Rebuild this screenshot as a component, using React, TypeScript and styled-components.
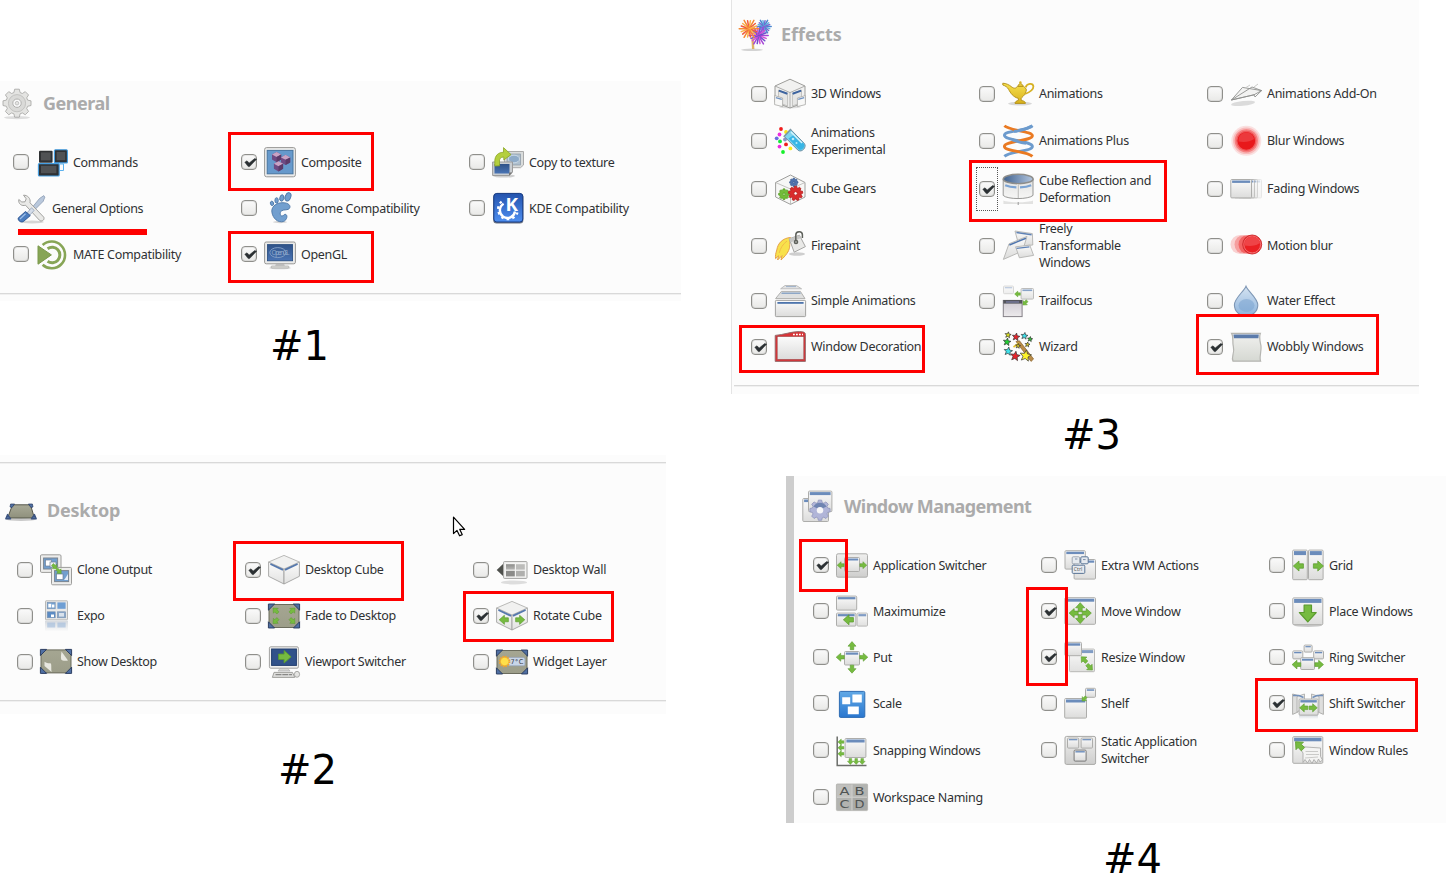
import React from 'react';
import styled, { createGlobalStyle } from 'styled-components';

const GlobalStyle = createGlobalStyle`
  body { margin: 0; background: #fff; }
`;

/* ---------- layout ---------- */

const Page = styled.main`
  display: flex;
  width: 1447px;
  height: 873px;
  overflow: hidden;
  background: #fff;
  font-family: 'Noto Sans', sans-serif;
`;

const Column = styled.div<{ $width: number; $top: number }>`
  display: flex;
  flex-direction: column;
  flex: none;
  box-sizing: border-box;
  width: ${p => p.$width}px;
  padding-top: ${p => p.$top}px;
`;

const Panel = styled.section<{ $width: number; $height: number; $indent?: number; $bar?: string; $pad: number }>`
  position: relative;
  flex: none;
  box-sizing: border-box;
  width: ${p => p.$width}px;
  height: ${p => p.$height}px;
  margin-left: ${p => p.$indent ?? 0}px;
  padding-top: ${p => p.$pad}px;
  background: #fcfcfc;
  border-left: ${p => p.$bar ?? 'none'};
`;

const Heading = styled.header<{ $left: number }>`
  display: flex;
  align-items: center;
  gap: 10px;
  height: 32px;
  padding-left: ${p => p.$left}px;
`;

const Title = styled.h2<{ $tracking?: number; $lift?: number }>`
  margin: 0 0 ${p => p.$lift ?? 0}px;
  color: #ababab;
  font-size: 18px;
  font-weight: 700;
  letter-spacing: ${p => p.$tracking ?? 0}px;
  line-height: 24px;
  white-space: nowrap;
`;

const Grid = styled.div<{ $left: number; $top: number; $rows: string }>`
  display: grid;
  grid-template-columns: repeat(3, 228px);
  grid-template-rows: ${p => p.$rows};
  width: 684px;
  margin-top: ${p => p.$top}px;
  padding-left: ${p => p.$left}px;
`;

const Item = styled.div<{ $plain?: boolean }>`
  display: flex;
  align-items: center;
  padding-left: ${p => (p.$plain ? 2 : 0)}px;
`;

const Check = styled.span`
  display: block;
  flex: none;
  box-sizing: border-box;
  width: 16px;
  height: 16px;
  margin-right: 7px;
  border: 1px solid #8f8f8b;
  border-radius: 4px;
  background: linear-gradient(#fafafa, #e9e9e7);
  box-shadow: inset 0 0 0 1px rgba(140, 140, 136, 0.18);
`;

const Tick = styled.svg`
  display: block;
  margin: -1px;
  overflow: visible;
`;

const IconBox = styled.svg`
  display: block;
  flex: none;
  width: 32px;
  height: 32px;
  overflow: visible;
`;

const Label = styled.span<{ $lift?: boolean }>`
  margin: 0 0 ${p => (p.$lift ? 1 : 0)}px 5px;
  color: #2f3133;
  font-size: 12.5px;
  letter-spacing: -0.3px;
  line-height: 17px;
  white-space: pre;
`;

const Divider = styled.hr<{ $y: number; $left?: number }>`
  position: absolute;
  top: ${p => p.$y}px;
  left: ${p => p.$left ?? 0}px;
  right: 0;
  height: 1px;
  margin: 0;
  border: 0;
  background: #d9d9d9;
  box-shadow: 0 1px 0 #f0f0f0;
`;

const Caption = styled.p<{ $left: number; $top: number; $height: number }>`
  flex: none;
  box-sizing: border-box;
  height: ${p => p.$height}px;
  margin: 0;
  padding: ${p => p.$top}px 0 0 ${p => p.$left}px;
  color: #000;
  font-family: 'DejaVu Sans', sans-serif;
  font-size: 40px;
  line-height: 28px;
`;

const Mark = styled.div<{ $x: number; $y: number; $w: number; $h: number }>`
  position: absolute;
  box-sizing: border-box;
  left: ${p => p.$x}px;
  top: ${p => p.$y}px;
  width: ${p => p.$w}px;
  height: ${p => p.$h}px;
  border: 3px solid #fe0000;
`;

const FocusRing = styled(Mark)`
  border: 1px dotted #555;
`;

const Pointer = styled.svg`
  position: absolute;
  left: 452px;
  top: 61px;
`;

const Defs = styled.svg`
  position: absolute;
  width: 0;
  height: 0;
`;

/* ---------- icon building blocks ---------- */

type WinProps = { x: number; y: number; w: number; h: number; bar?: number; o?: number; stroke?: string };
const Win = ({ x, y, w, h, bar = 2, o = 1, stroke = '#adadab' }: WinProps) => (
  <g opacity={o}>
    <rect x={x + 0.5} y={y + 0.5} width={w - 1} height={h - 1} rx="1" fill="url(#gWin)" stroke={stroke} />
    <rect x={x + 1.8} y={y + 1.5} width={w - 3.6} height={bar} fill="#6b8cbb" />
  </g>
);

type ArrowProps = { x: number; y: number; r?: number; s?: number };
const Arrow = ({ x, y, r = 0, s = 1 }: ArrowProps) => (
  <path
    d="M-4.6-2.1H-.4V-4.8L5 0L-.4 4.8V2.1H-4.6Z"
    transform={`translate(${x} ${y}) rotate(${r}) scale(${s})`}
    fill="#76bb40"
    stroke="#5b9c2e"
    strokeWidth="0.7"
    strokeLinejoin="round"
  />
);

type GearProps = { x: number; y: number; r: number; n?: number; fill: string; stroke: string; hole?: string };
const Gear = ({ x, y, r, n = 8, fill, stroke, hole = '#fff' }: GearProps) => {
  const pts: string[] = [];
  for (let i = 0; i < n; i++) {
    const a = (i * 2 * Math.PI) / n - Math.PI / 2;
    const step = Math.PI / n;
    [[-0.72, 0.78], [-0.42, 1], [0.42, 1], [0.72, 0.78]].forEach(([k, m]) => {
      pts.push(`${(x + Math.cos(a + k * step) * r * m).toFixed(2)},${(y + Math.sin(a + k * step) * r * m).toFixed(2)}`);
    });
  }
  return (
    <g strokeWidth="0.8">
      <polygon points={pts.join(' ')} fill={fill} stroke={stroke} strokeLinejoin="round" />
      <circle cx={x} cy={y} r={r * 0.24} fill={hole} stroke={stroke} />
    </g>
  );
};

const Star = ({ x, y, r, c }: { x: number; y: number; r: number; c: string }) => {
  const pts = Array.from({ length: 10 }, (_, i) => {
    const a = (i * Math.PI) / 5 - Math.PI / 2 + 0.15;
    const m = i % 2 ? r * 0.45 : r;
    return `${(x + Math.cos(a) * m).toFixed(2)},${(y + Math.sin(a) * m).toFixed(2)}`;
  });
  return <polygon points={pts.join(' ')} fill={c} stroke="#333" strokeWidth="0.7" />;
};

const Burst = ({ x, y, r, colors }: { x: number; y: number; r: number; colors: string[] }) => (
  <g strokeWidth="1.5" strokeLinecap="round">
    {Array.from({ length: 18 }, (_, i) => {
      const a = (i * 2 * Math.PI) / 18;
      const m = i % 3 === 0 ? r : r * 0.84;
      return (
        <line
          key={i}
          x1={x}
          y1={y}
          x2={x + Math.cos(a) * m}
          y2={y + Math.sin(a) * m}
          stroke={colors[i % colors.length]}
        />
      );
    })}
  </g>
);

const CubeShape = () => (
  <g strokeLinejoin="round">
    <path d="M.6 8L16 15V30L.6 22.3Z" fill="url(#gFace)" stroke="#a2a2a0" strokeWidth="0.9" />
    <path d="M31.4 8L16 15V30L31.4 22.3Z" fill="url(#gFace)" stroke="#a2a2a0" strokeWidth="0.9" />
    <path d="M16 1.4L31.4 8L16 15L.6 8Z" fill="#f1f1f0" stroke="#b2b2b0" strokeWidth="0.9" />
    <path d="M2.4 10L15 15.900M17 15.900L29.6 10" stroke="#5578ad" strokeWidth="1.8" fill="none" />
  </g>
);

const DeskBase = () => (
  <g>
    <rect x="1" y="4.5" width="30" height="23" rx="1" fill="url(#gDesk)" stroke="#6b6c5d" />
    <path d="M.4 4H6.6L.4 10.2ZM31.6 4H25.4L31.6 10.2ZM.4 28H6.6L.4 21.8ZM31.6 28H25.4L31.6 21.8Z" fill="#4f6fa3" stroke="#27395c" strokeWidth="0.9" />
  </g>
);

const Hex = ({ x, y }: { x: number; y: number }) => (
  <g transform={`translate(${x} ${y})`}>
    <path d="M0-5L4.6-2.4V2.6L0 5.2L-4.6 2.6V-2.4Z" fill="#6f4a84" />
    <path d="M0-5L4.6-2.4L0 0L-4.6-2.4Z" fill="#c9a3c4" />
    <path d="M0 0L4.6-2.4V2.6L0 5.2Z" fill="#5b3a69" />
  </g>
);

const icons: Record<string, React.ReactNode> = {
  general: (
    <g>
      <ellipse cx="16" cy="29.6" rx="13" ry="1.6" fill="#000" opacity="0.12" />
      <Gear x={16} y={15.2} r={14.2} n={8} fill="#e4e4e2" stroke="#a3a3a1" hole="#f6f6f5" />
      <circle cx="16" cy="15.2" r="8.6" fill="#dadad8" stroke="#c3c3c1" />
      <circle cx="16" cy="15.2" r="4.2" fill="#fafafa" stroke="#afafad" />
      <circle cx="16" cy="15.2" r="1.8" fill="#e4e4e2" stroke="#b9b9b7" strokeWidth="0.8" />
    </g>
  ),
  commands: (
    <g>
      <rect x="3" y="4.8" width="13.6" height="12" rx="1" fill="#2f3133" />
      <rect x="5" y="6.4" width="9.6" height="8" fill="#505254" />
      <path d="M24 18h3.5v6.5H24" fill="none" stroke="#5cb2ee" />
      <rect x="18.4" y="3.7" width="13" height="13.2" rx="1" fill="#2f3133" stroke="#469fe2" strokeWidth="1.1" />
      <rect x="20.6" y="6" width="8.6" height="8.2" fill="#505254" />
      <rect x="2.4" y="17.6" width="20.8" height="12.4" rx="1" fill="#2f3133" stroke="#469fe2" strokeWidth="1.1" />
      <rect x="5" y="19.8" width="15.4" height="7.4" fill="#505254" />
    </g>
  ),
  composite: (
    <g>
      <rect x="0.6" y="1.6" width="30.8" height="29.2" rx="2" fill="#ededec" stroke="#989896" />
      <rect x="3.2" y="4.4" width="25.8" height="23.4" fill="#6699cc" stroke="#47749f" />
      <Hex x={12.6} y={11} />
      <Hex x={21.6} y={13.8} />
      <Hex x={14.5} y={20.2} />
    </g>
  ),
  copy: (
    <g>
      <ellipse cx="12" cy="30" rx="11" ry="1.6" fill="#000" opacity="0.18" />
      <path d="M12.5 5.5H31.5V19L28.5 21.7H12.5Z" fill="#d9dcdc" stroke="#aaa" />
      <rect x="15" y="8" width="13.5" height="11" fill="#aebfce" stroke="#8b97a3" strokeWidth="0.7" />
      <ellipse cx="22" cy="13" rx="5.5" ry="3.8" fill="#8eabc8" stroke="#dbe6ef" strokeWidth="0.7" />
      <path d="M.6 16H20.5V26L17 29.5H.6Z" fill="#c9cdd1" stroke="#9b9b9b" />
      <rect x="2.5" y="18" width="15" height="9.5" fill="url(#gNavy)" />
      <path d="M17 30L20.5 26.5H17Z" fill="#777" />
      <path d="M2.8 20V16C2.5 9 7 6.2 11.5 6.3V1.6L19 8.6L11.8 14V11C8.5 11 7 13 7.5 16V19.8Z" fill="#b4cf3e" stroke="#8ba624" strokeWidth="0.8" />
    </g>
  ),
  tools: (
    <g>
      <ellipse cx="17" cy="30" rx="12" ry="1.4" fill="#000" opacity="0.15" />
      <path d="M28.8 3.6L29.8 5.2L28.2 9.3L19 18.5L16.6 16.2L24.5 6.5Z" fill="#b9c8dc" stroke="#8a9bb3" strokeWidth="0.8" />
      <path d="M3.8 7.5C3 12 7 14.5 10.5 13.2L24.5 28.3C26 30 30 28.5 28.8 25.2L15 10.8C16 6.5 12.5 3 8.5 3.2L11.2 6.8L10 9.8L6.8 10Z" fill="#e9e9e7" stroke="#989896" strokeWidth="0.9" />
      <path d="M16.5 15.8L19.2 18.4L13.5 24.5L11 22Z" fill="#d4dce8" stroke="#8a9bb3" strokeWidth="0.7" />
      <path d="M10.5 19.5L15.3 23.6L8.6 29.4C6.5 31 2.6 29 3.2 26Z" fill="#4c7dbf" stroke="#2d5490" strokeWidth="0.9" />
      <path d="M10.5 21.8L5 27" stroke="#9fc0ea" strokeWidth="1.2" />
    </g>
  ),
  gnome: (
    <g fill="#729fcf" stroke="#4c76a6" strokeWidth="0.9">
      <ellipse cx="16" cy="30" rx="7" ry="1.2" fill="#000" opacity="0.15" stroke="none" />
      <ellipse cx="24" cy="4.8" rx="2.7" ry="4.3" transform="rotate(22 24 4.8)" />
      <ellipse cx="17.8" cy="6" rx="2" ry="3.2" transform="rotate(12 17.8 6)" />
      <ellipse cx="12.6" cy="8.4" rx="1.7" ry="2.7" />
      <ellipse cx="8" cy="11.4" rx="1.6" ry="2.2" transform="rotate(-15 8 11.4)" />
      <path d="M7.8 19C7.8 14 13 10.5 19 10.7C24.5 10.8 27 13.5 25.6 16.2C24.3 18.6 20 17.2 17.6 18.8C15.4 20.4 16 24 18 24C20 24 20 21.8 21.8 22.4C24 23.2 23 29.8 17.5 29.8C11.5 29.8 8 24 7.8 19Z" />
    </g>
  ),
  kde: (
    <g>
      <rect x="1.2" y="1.4" width="30.2" height="30" rx="3.5" fill="#6c7382" />
      <rect x="1.8" y="1.4" width="29" height="28.6" rx="3" fill="url(#gKde)" stroke="#173c86" />
      <path d="M11.600 11.800A7.600 7.600 0 1 0 23 19.500" fill="none" stroke="#fff" strokeWidth="2.4" />
      <path d="M9.600 9.600A10 10 0 1 0 25.500 20.500" fill="none" stroke="#fff" strokeWidth="2.2" strokeDasharray="2.6 3.1" />
      <text x="13.4" y="18.6" fontFamily="Noto Sans" fontWeight="700" fontSize="18" fill="#fff" textLength="12.500" lengthAdjust="spacingAndGlyphs">K</text>
    </g>
  ),
  mate: (
    <g fill="none" stroke="#87a556">
      <path d="M6.600 7A13.400 13.400 0 1 1 6.600 26.800" strokeWidth="2.6" />
      <path d="M11.600 10.800A7.700 7.700 0 1 1 11.600 23.200" strokeWidth="3" />
      <path d="M2 7.800L15.4 16.900L2 26.200Z" fill="#87a556" stroke="#7b994b" />
    </g>
  ),
  opengl: (
    <g>
      <ellipse cx="16" cy="30" rx="11" ry="1.3" fill="#000" opacity="0.14" />
      <path d="M12 25.5H20L21 28.5H11Z" fill="#ccc" />
      <rect x="7" y="28" width="18" height="2" rx="1" fill="#e0e0de" stroke="#a4a4a2" strokeWidth="0.7" />
      <rect x="0.6" y="4" width="30.8" height="21.8" rx="1.6" fill="#ebebea" stroke="#989896" />
      <rect x="3.4" y="6.6" width="25.2" height="16.2" fill="url(#gNavy)" stroke="#254a7e" strokeWidth="0.8" />
      <ellipse cx="13.800" cy="14.6" rx="8" ry="5" fill="none" stroke="#7f9cc4" strokeWidth="1" />
      <text x="7.5" y="17" fontFamily="Noto Sans" fontSize="6.6" fill="#8fa9cb" textLength="18">OpenGL</text>
    </g>
  ),
  desktop: (
    <g>
      <ellipse cx="16" cy="25.6" rx="15" ry="1.3" fill="#000" opacity="0.2" />
      <path d="M7.5 10.8H25.5L29.4 24H2.6Z" fill="url(#gOlive)" stroke="#55564a" strokeLinejoin="round" />
      <path d="M5.6 10H9.6L7 13.6L5 13ZM27.4 10H23.4L26 13.6L28 13Z" fill="#4f6fa3" stroke="#2b3d63" strokeWidth="0.7" />
      <path d="M2.6 20.600L5.600 24.8H.8ZM29.4 20.600L26.400 24.8H31.2Z" fill="#4f6fa3" stroke="#3d5582" strokeLinejoin="round" strokeWidth="1.4" />
    </g>
  ),
  clone: (
    <g>
      <rect x="0.5" y="0.8" width="20.5" height="17.6" rx="1.2" fill="#ededec" stroke="#9c9c9a" />
      <rect x="3.6" y="4" width="14" height="11" fill="#729fcf" stroke="#7a8490" />
      <rect x="5.5" y="6" width="6" height="6" fill="#fff" stroke="#6d7f97" strokeWidth="0.7" />
      <rect x="10" y="8" width="6" height="5" fill="#eef2f7" stroke="#6d7f97" strokeWidth="0.7" />
      <rect x="11.5" y="13.4" width="20" height="17.4" rx="1.2" fill="#ededec" stroke="#9c9c9a" />
      <rect x="14.6" y="16.6" width="14" height="11" fill="#729fcf" stroke="#7a8490" />
      <rect x="16.5" y="20" width="6.5" height="5.5" fill="#fff" stroke="#6d7f97" strokeWidth="0.7" />
      <path d="M24 26H28V20L25.5 24Z" fill="#e7eef8" />
      <Arrow x={14.6} y={12.6} r={45} s={0.65} />
      <Arrow x={19} y={17.2} r={45} s={0.65} />
    </g>
  ),
  cube: <CubeShape />,
  wall: (
    <g>
      <ellipse cx="18" cy="28.4" rx="13" ry="2" fill="#000" opacity="0.12" />
      <path d="M.7 16L7 10V22Z" fill="#4e504c" />
      <rect x="7.6" y="7.6" width="23.4" height="16.8" rx="0.8" fill="#f3f3f2" stroke="#a3a3a1" />
      <rect x="10" y="10.2" width="8.8" height="5.4" fill="url(#gGrey)" />
      <rect x="20" y="10.2" width="8.8" height="5.4" fill="#bcbcba" />
      <rect x="10" y="16.800" width="8.8" height="5.6" fill="#8b8b89" />
      <rect x="20" y="16.800" width="8.8" height="5.6" fill="#afafad" />
    </g>
  ),
  expo: (
    <g>
      <rect x="5.5" y="0.8" width="22" height="19" rx="0.6" fill="#e9e9e8" stroke="#b9b9b7" />
      <rect x="7.2" y="2.4" width="8" height="6.4" fill="#729fcf" stroke="#7790ae" strokeWidth="0.6" />
      <path d="M8.3 3.8h3v3.6h-3zM12 4.4h2.4v3H12z" fill="#fff" />
      <rect x="17.4" y="2.4" width="8.2" height="6.4" fill="#6f9fd4" />
      <rect x="7.2" y="11.8" width="8" height="6" fill="#5a8bc4" stroke="#7790ae" strokeWidth="0.6" />
      <path d="M11 14.5h3v2.6h-3z" fill="#fff" />
      <rect x="17.4" y="11.8" width="8.2" height="6" fill="#89a6c8" stroke="#7790ae" strokeWidth="0.6" />
      <rect x="19" y="13" width="5" height="3.6" fill="#d9e2ec" />
      <rect x="5" y="20.6" width="23" height="11" fill="url(#gReflect)" />
      <path d="M7.2 22.4h8v5h-8zM17.4 22.4h8.2v5h-8.2z" fill="#9cb9da" opacity="0.6" />
    </g>
  ),
  fade: (
    <g>
      <DeskBase />
      <Arrow x={7.600} y={10.600} r={225} s={0.72} />
      <Arrow x={24.400} y={10.600} r={-45} s={0.72} />
      <Arrow x={7.600} y={21} r={135} s={0.72} />
      <Arrow x={24.400} y={21} r={45} s={0.72} />
    </g>
  ),
  rotate: (
    <g>
      <CubeShape />
      <Arrow x={8} y={19.8} r={180} s={0.95} />
      <Arrow x={24} y={19.8} s={0.95} />
    </g>
  ),
  show: (
    <g>
      <g transform="translate(0 -0.6)"><DeskBase /></g>
      <path d="M21.5 5.5L28 14.5C25 15.2 22 14.8 21.2 13.5C20.6 11 21.2 8 21.5 5.5Z" fill="#e8e8e0" />
      <path d="M4.5 15.8C7 17.8 9.5 17.2 11 17.4C11.6 20 11 23 11.6 26L4.5 20Z" fill="#e8e8e0" />
    </g>
  ),
  viewport: (
    <g>
      <rect x="1.4" y="0.8" width="29" height="21.4" rx="1.4" fill="#f0f0ef" stroke="#a3a3a1" />
      <rect x="3.6" y="3" width="24.8" height="16.4" fill="#31528a" stroke="#233f6e" />
      <path d="M12 22.5H20L22 25H10Z" fill="#d5d5d3" stroke="#aaa" strokeWidth="0.6" />
      <path d="M6 26.4H24.5L26.8 31.4H4.4Z" fill="#dededc" stroke="#979795" strokeWidth="0.9" />
      <path d="M7.5 28.6H24" stroke="#888886" strokeWidth="1.4" strokeDasharray="6 0.8" />
      <ellipse cx="29" cy="28.3" rx="2.6" ry="3" fill="#e5e5e3" stroke="#999997" strokeWidth="0.8" />
      <Arrow x={16.6} y={10.8} s={1.3} />
    </g>
  ),
  widget: (
    <g>
      <DeskBase />
      <rect x="11.5" y="11.4" width="17.4" height="8.4" rx="1.5" fill="#c8d5e8" stroke="#8fa0b8" strokeWidth="0.6" />
      <circle cx="8.6" cy="15.5" r="5" fill="none" stroke="#f5a32a" strokeWidth="1.6" strokeDasharray="1.6 1" />
      <circle cx="8.6" cy="15.5" r="4.2" fill="#ffdf4a" stroke="#f3ad24" strokeWidth="0.8" />
      <text x="14.4" y="18.2" fontFamily="DejaVu Sans" fontSize="6.6" fill="#3a4046" textLength="13">7°C</text>
    </g>
  ),
  effects: (
    <g>
      <ellipse cx="13" cy="31.8" rx="11" ry="1.2" fill="#000" opacity="0.16" />
      <path d="M13.5 20L14.2 31" stroke="#e0b265" strokeWidth="2.4" />
      <Burst x={25} y={8.6} r={7.2} colors={['#4a86cf', '#5fb0e2', '#7a6ad0']} />
      <Burst x={19.6} y={17.6} r={9.6} colors={['#a446d6', '#d44fd8', '#6f4fcb']} />
      <Burst x={10} y={10.8} r={9.8} colors={['#f58a33', '#ef5a3e', '#fab248']} />
    </g>
  ),
  windows3d: (
    <g strokeLinejoin="round">
      <ellipse cx="16" cy="29" rx="11" ry="1.5" fill="#000" opacity="0.12" />
      <path d="M16 1.2L31 8V24L16 30L1 24V8Z" fill="#f1f1f0" stroke="#92928f" strokeWidth="0.9" />
      <path d="M1 8L16 14.600L31 8M16 14.600V30" fill="none" stroke="#a5a5a3" strokeWidth="0.9" />
      <path d="M4.500 12L13.600 15.400V28L4.500 24.500ZM27.500 12L18.400 15.400V28L27.500 24.500Z" fill="#e6e6e5" stroke="#b0b0ae" strokeWidth="0.7" />
      <path d="M4.800 12.600L13.400 15.800M27.200 12.600L18.600 15.800" stroke="#3d64a0" strokeWidth="2" />
      <path d="M.6 17.5L8.6 20V28.600L.6 26.6ZM31.4 17.5L23.400 20V28.600L31.4 26.6Z" fill="#f8f8f7" stroke="#a8a8a6" strokeWidth="0.8" />
      <path d="M1.800 19.600L7.800 21.400M30.200 19.600L24.200 21.400" stroke="#6f91c0" strokeWidth="1.300" />
    </g>
  ),
  experimental: (
    <g>
      {([[7, 4, '#f01c1c'], [5.5, 9.5, '#f02be0'], [2.7, 13.3, '#6c6ce0'], [6, 16.4, '#15e83a'], [11, 14.5, '#8c92c4'],
        [5.5, 21.6, '#f02be0'], [9, 27, '#15f02a'], [12, 19.4, '#f01c1c'], [16.4, 23.4, '#fbee1a'], [12, 7, '#fbe01a']] as [number, number, string][]).map(
        ([x, y, c], i) => <circle key={i} cx={x} cy={y} r="1.9" fill={c} />
      )}
      <path d="M10.4 11.6L16.6 4.4L30.4 18.6C33 22 28 27.8 24.2 25.4Z" fill="#7fd4ee" stroke="#6b8fa3" strokeWidth="1" />
      <path d="M14.5 13.5L20.5 9.5L30 19C31.6 21.6 28 26 24.8 24.6Z" fill="#38b6e6" />
      <path d="M17 7L28 18" stroke="#d8f4fb" strokeWidth="1.4" />
      <circle cx="19" cy="14" r="1.3" fill="#b9ecf9" /><circle cx="22.5" cy="18" r="1" fill="#b9ecf9" />
      <path d="M9.8 11.8L17 4" stroke="#7d98a5" strokeWidth="1.6" />
    </g>
  ),
  gears: (
    <g strokeLinejoin="round">
      <path d="M16.5 2L31 9.5V24L16.5 31.4L1.6 24V9.5Z" fill="#f7f7f6" stroke="#949492" strokeWidth="0.9" />
      <path d="M1.6 9.5L16.5 16L31 9.5M16.5 16V31" fill="none" stroke="#b5b5b3" strokeWidth="0.8" />
      <Gear x={19.8} y={9.4} r={4.2} fill="#4f73ae" stroke="#3c5c92" hole="#91aad0" />
      <Gear x={10} y={21.2} r={5.4} fill="#72bd38" stroke="#5aa02a" hole="#b4e08c" />
      <Gear x={21.6} y={20.4} r={7.2} n={9} fill="#d92c2c" stroke="#b52020" hole="#fff" />
    </g>
  ),
  firepaint: (
    <g>
      <ellipse cx="23" cy="24" rx="8" ry="1.8" fill="#000" opacity="0.18" />
      <path d="M16.5 7.5C9 8 3.8 13 2.8 20C1.6 23.5 1.2 26 1.6 28.6L4.5 25.8L3.6 30L8 25.6L7 30C11.5 26 15 21.5 15.6 17.2C16 13.5 15.5 10.5 16.5 7.5Z" fill="#f8e14b" stroke="#e6a14a" strokeWidth="1" />
      <path d="M13 11C9 14 6.4 18 5.2 23" fill="none" stroke="#f2b747" strokeWidth="0.9" />
      <path d="M15.2 8.8L25.4 5.2L31.4 16.6L20.2 22.2Z" fill="#e9e9e7" stroke="#a5a5a3" strokeLinejoin="round" />
      <path d="M15.2 8.8L25.4 5.2L27 8L16.6 12.4Z" fill="#c6c6c4" />
      <path d="M21.8 11.5V5C21.8.8 28.2.6 28.4 4.6V8" fill="none" stroke="#5d605a" strokeWidth="1.5" />
      <circle cx="22" cy="12" r="2.3" fill="#5d605a" /><circle cx="22" cy="12" r="0.8" fill="#cfcfcd" />
    </g>
  ),
  simple: (
    <g>
      <path d="M6.6 3.8L11 .5H22.4L27.6 3.8Z" fill="#e2e3e4" stroke="#b3b3b1" strokeWidth="0.8" />
      <path d="M12 1.6H22" stroke="#9db0c8" />
      <path d="M1.6 13.6L7.4 6.4H26.4L31 13.6Z" fill="#dfe0e0" stroke="#a9a9a7" strokeWidth="0.9" />
      <path d="M7.5 8.2H26.5" stroke="#7f9cc2" strokeWidth="1.3" />
      <rect x="1.4" y="15.4" width="30.2" height="16.2" rx="0.8" fill="url(#gWin)" stroke="#a3a3a1" />
      <rect x="3.4" y="17" width="26.2" height="1.8" fill="#4d74ac" />
    </g>
  ),
  decoration: (
    <g>
      <path d="M1.2 4.4C10 3.6 17 .8 24 .6C29 .6 31.6 1 31.4 3.6V30.4H1.2Z" fill="#d93438" stroke="#8f6a6a" strokeWidth="0.9" />
      <rect x="3.200" y="5.600" width="26.600" height="22.800" fill="url(#gWin)" stroke="#a04a4a" strokeWidth="0.6" />
      <path d="M19 3.4H29" stroke="#fff" strokeWidth="1.5" strokeDasharray="1.8 1.2" />
    </g>
  ),
  lamp: (
    <g>
      <ellipse cx="18" cy="25.6" rx="12" ry="2" fill="#000" opacity="0.14" />
      <path d="M.8 5.2C4 5.4 7 6.6 9.8 9C12.6 11 14 10.2 15.6 8.2H21.4C22.8 9.4 24 10.4 24.4 11.8C23.5 17 20.6 18.6 19.2 20.2V22.4C22 22.8 23.6 24 23.4 25.4H13C12.8 24 14.4 22.8 16.4 22.4V20.4C11 19 8.6 15 6.6 11.4C5.4 9 3.2 7.8.8 7Z" fill="url(#gGold)" stroke="#b08c14" strokeWidth="0.9" />
      <path d="M23.6 9.4C25 5 31 4.6 31.4 8.4C31.6 12.6 26.6 14.6 23 16" fill="none" stroke="#d6b124" strokeWidth="1.8" />
      <path d="M16 8.4C16 6.4 17.4 5.8 18.4 5.4C19.4 5.8 21 6.4 21 8.4Z" fill="#e7c83c" stroke="#b08c14" strokeWidth="0.8" />
      <circle cx="18.4" cy="4.4" r="1.2" fill="#d6b124" />
    </g>
  ),
  plus: (
    <g fill="none" strokeWidth="2.9">
      <path d="M2.4 31.4C8 26 30.4 26.5 30.4 21.4C30.4 16 2.4 15.5 2.4 10.2C2.4 5.5 26 6 30.4 .8" stroke="#6d9bcd" />
      <path d="M2.4 .8C8 6 30.4 6 30.4 10.8C30.4 15.8 2.4 16 2.4 21.4C2.4 26.5 25 26 30.4 31.4" stroke="#ea7a22" />
      <path d="M12 6.4Q22 5.6 30.4 .8M10 14.600Q18 17.6 24 18.2" stroke="#6d9bcd" />
    </g>
  ),
  reflection: (
    <g>
      <path d="M1.4 27.6C6 30 26 30 31 27.6V31H1.4Z" fill="#d9d9d8" opacity="0.75" />
      <path d="M16.2 29V32" stroke="#999" />
      <path d="M1.2 6V22.4C5 26.6 27 26.6 31 22.4V6Z" fill="url(#gCyl)" stroke="#8d8d8b" strokeWidth="0.9" />
      <ellipse cx="16.2" cy="6" rx="14.9" ry="4.7" fill="url(#gNavyTop)" stroke="#8d8d8b" strokeWidth="1.6" />
      <path d="M16.2 11V25" stroke="#fff" strokeWidth="2" />
      <path d="M16.2 11V25.4" stroke="#999997" strokeWidth="0.8" />
      <path d="M3.2 12.2C6 13.4 10 14.2 14.4 14.3M18 14.3C22 14.2 26.5 13.4 29.2 12.2" fill="none" stroke="#7ba3d3" strokeWidth="2.2" />
    </g>
  ),
  freely: (
    <g strokeLinejoin="round">
      <path d="M13 1L30.4 3.6L30.8 15L17 16Z" fill="url(#gWin)" stroke="#b3b3b1" strokeWidth="0.9" />
      <path d="M14.4 2.6L29.6 4.8" stroke="#5f82b5" strokeWidth="1.5" />
      <path d="M7 13.8L25 6.4L20.5 21L1.4 29.4Z" fill="url(#gWin)" stroke="#b3b3b1" strokeWidth="0.9" />
      <path d="M7.4 15L24 8.2" stroke="#4f75ad" strokeWidth="1.5" />
      <path d="M13.6 16.8L27.8 15.2L31.6 25.4L17.4 27.8Z" fill="url(#gWin)" stroke="#b3b3b1" strokeWidth="0.9" />
      <path d="M14.6 18.4L27.4 16.8" stroke="#5f82b5" strokeWidth="1.3" />
    </g>
  ),
  trail: (
    <g>
      <Win x={1} y={0.6} w={11} h={8.6} bar={1.2} o={0.45} />
      <Win x={18.6} y={3} w={13.4} h={11.6} bar={1.6} o={0.8} />
      <Arrow x={15.6} y={9} r={180} s={0.6} />
      <Arrow x={23} y={17.8} r={135} s={0.65} />
      <rect x="1.3" y="15.4" width="18.8" height="16.2" fill="url(#gTrail)" stroke="#858188" />
      <rect x="1.3" y="15" width="18.8" height="3.6" fill="#55565c" />
      <path d="M4 17H17" stroke="#8b90c4" strokeWidth="0.9" />
    </g>
  ),
  wizard: (
    <g>
      <path d="M14 10.5L17.5 9.8L31.6 28L29 30.4Z" fill="#b98c49" stroke="#8a6430" strokeWidth="0.7" />
      <path d="M11.5 16L17 12" stroke="#e5c22a" strokeWidth="1.6" />
      <Star x={6} y={4} r={3.2} c="#d8df22" />
      <Star x={14} y={6} r={4} c="#e8252c" />
      <Star x={22.4} y={5} r={3.6} c="#3fe2ec" />
      <Star x={28} y={8.2} r={2.7} c="#2fc437" />
      <Star x={5} y={11} r={4} c="#22cf33" />
      <Star x={25.4} y={13.6} r={2.6} c="#d8c722" />
      <Star x={16} y={15} r={2.6} c="#d8c722" />
      <Star x={6.2} y={20.4} r={4.4} c="#3fe2ec" />
      <Star x={13.2} y={25.2} r={5} c="#e8252c" />
      <Star x={23.6} y={24.8} r={6} c="#fdf32a" />
    </g>
  ),
  plane: (
    <g fill="none" stroke="#8f908d" strokeWidth="0.9" strokeLinejoin="round">
      <ellipse cx="13" cy="25.4" rx="12" ry="2.4" fill="#000" opacity="0.13" stroke="none" transform="rotate(-6 13 25)" />
      <path d="M1.4 22L12.5 9.4L31.6 12.6L24 16.8Z" fill="#f3f3f2" />
      <path d="M1.4 22L22 9L31.6 12.6M1.4 22L24 16.8L25 19L31.6 12.6" />
      <path d="M16 9.5L20 7M24 9L28 6" stroke="#c5c5c3" />
    </g>
  ),
  blur: (
    <g>
      <circle cx="16.3" cy="15.8" r="15" fill="#ef2929" opacity="0.13" />
      <circle cx="16.3" cy="15.8" r="13.3" fill="#ef2929" opacity="0.2" />
      <circle cx="16.3" cy="15.8" r="11.6" fill="#ef2929" opacity="0.4" />
      <circle cx="16.3" cy="15.8" r="9.5" fill="#e8181b" stroke="#f0595b" strokeWidth="1.2" />
      <path d="M8.5 16.5A7.8 7.8 0 0 1 24.1 14Q18 18 8.5 16.5Z" fill="#ec393c" />
    </g>
  ),
  fading: (
    <g>
      <Win x={12} y={6} w={20} h={19.4} o={0.25} />
      <Win x={8} y={6} w={20} h={19.4} o={0.45} />
      <Win x={4} y={6} w={21} h={19.4} o={0.65} />
      <Win x={0.3} y={6} w={21.7} h={19.4} bar={2.4} />
    </g>
  ),
  motion: (
    <g>
      <circle cx="10" cy="14.5" r="9.5" fill="#ef2929" opacity="0.2" />
      <circle cx="14" cy="14.5" r="9.5" fill="#ef2929" opacity="0.3" />
      <circle cx="18" cy="14.5" r="9.5" fill="#ef2929" opacity="0.5" />
      <circle cx="22.2" cy="14.5" r="9.5" fill="#ea2023" stroke="#c92a2c" strokeWidth="0.9" />
      <circle cx="22.2" cy="14.5" r="8.4" fill="none" stroke="#f4797a" strokeWidth="0.9" />
      <path d="M14.5 15.5A7.8 7.8 0 0 1 30 13Q24 17 14.5 15.5Z" fill="#ef4447" />
    </g>
  ),
  water: (
    <g>
      <path d="M16 1.2C18 6.5 27.8 13 27.8 20A11.7 11.2 0 0 1 4.4 20C4.4 13 14 6.5 16 1.2Z" fill="url(#gWater)" stroke="#7e97b5" strokeWidth="1.1" />
      <ellipse cx="16.5" cy="20.5" rx="8" ry="6.5" fill="#7ea6d2" opacity="0.6" />
    </g>
  ),
  wobbly: (
    <g>
      <path d="M1.6 2.4H30.4C28.6 7 30.400 11 31 15C31.600 21 29 26 30.600 30.2H3C.8 26 5 22 3.400 16C2 11 4 6 1.6 2.4Z" fill="url(#gWob)" stroke="#b5b5b1" strokeWidth="1.2" />
      <path d="M3.4 3.6H28.8L28.400 7.200H4Z" fill="#5b7bab" />
    </g>
  ),
  wm: (
    <g>
      <Win x={0.3} y={8} w={26.7} h={24} bar={2.6} />
      <Win x={6} y={0.6} w={24.4} h={21.600} bar={3} />
      <Gear x={18} y={20.2} r={10.2} fill="#b1b5d8" stroke="#8f94ba" hole="#f4f4f8" />
      <path d="M11.400 16.500A7.600 7.600 0 0 1 24.600 16.500L20.400 18.600A3.200 3.200 0 0 0 15.600 18.600Z" fill="#5f78a8" opacity="0.8" />
      <circle cx="18" cy="20.200" r="3.200" fill="#f6f6f8" />
    </g>
  ),
  appswitch: (
    <g>
      <rect x="0.5" y="4.8" width="31" height="23.4" rx="1.6" fill="url(#gPanel)" stroke="#adadab" />
      <Win x={8} y={8} w={16} h={15} />
      <Arrow x={4.8} y={16.2} r={180} s={0.72} />
      <Arrow x={27.2} y={16.2} s={0.72} />
    </g>
  ),
  maximumize: (
    <g>
      <Win x={0} y={0.6} w={21.2} h={15} bar={2.2} />
      <Win x={0} y={17.6} w={20.4} h={14} bar={2.2} />
      <Win x={20.6} y={17.6} w={11.4} h={14} bar={2.2} o={0.85} />
      <Arrow x={12.6} y={24.8} r={180} s={1.05} />
    </g>
  ),
  put: (
    <g>
      <Win x={8} y={10} w={16} h={14.5} bar={2.2} />
      <Arrow x={16} y={4.8} r={-90} s={0.84} />
      <Arrow x={16} y={28} r={90} s={0.84} />
      <Arrow x={4.4} y={16.2} r={180} s={0.84} />
      <Arrow x={27.6} y={16.2} s={0.84} />
    </g>
  ),
  scale: (
    <g>
      <rect x="3.4" y="4.4" width="25.4" height="26" rx="1.2" fill="url(#gScale)" stroke="#2e6db3" />
      <path d="M6.2 10.2h8v7h-8zM16.4 7.4h9.4v8h-9.4zM11.8 19.6h11v7.6h-11z" fill="#fff" />
    </g>
  ),
  snapping: (
    <g>
      <path d="M1.2 2.5V31.5H30.5" fill="none" stroke="#6c6e6a" strokeWidth="1.5" />
      <Win x={8.6} y={4} w={21.8} h={20} bar={3} />
      {[8, 13.8, 19.8].map(y => <Arrow key={y} x={5} y={y} r={180} s={0.62} />)}
      {[14.4, 20.2, 26.2].map(x => <Arrow key={x} x={x} y={27.4} r={90} s={0.62} />)}
    </g>
  ),
  naming: (
    <g>
      <rect x="0.4" y="3" width="31.2" height="26.6" rx="1" fill="#c0c0bd" stroke="#adadaa" strokeWidth="0.8" />
      <path d="M16.3 16.800H31V29H16.3Z" fill="#a9aaa7" />
      <path d="M16.3 3.5H31V15.8H16.3ZM1 17H15.6V29H1Z" fill="#b2b3b0" />
      <path d="M1 16.2H31M16 3.5V29.5" stroke="#d0d0cd" strokeWidth="0.9" />
      <g fontFamily="DejaVu Sans" fontSize="11.2" fill="#4f5453">
        <text x="3.6" y="14" textLength="10" lengthAdjust="spacingAndGlyphs">A</text>
        <text x="18.4" y="14" textLength="10" lengthAdjust="spacingAndGlyphs">B</text>
        <text x="3.6" y="26.6" textLength="10" lengthAdjust="spacingAndGlyphs">C</text>
        <text x="18.4" y="26.6" textLength="10" lengthAdjust="spacingAndGlyphs">D</text>
      </g>
    </g>
  ),
  extra: (
    <g>
      <Win x={0.5} y={1.2} w={21.3} h={19.4} bar={2.4} />
      <Win x={9.6} y={10} w={22.4} h={20.6} bar={2.2} />
      <g fill="#e6eaef" stroke="#5a7596" strokeWidth="1">
        <rect x="8.2" y="7.8" width="7.4" height="7" rx="1" stroke="#a0a9b4" />
        <rect x="16.8" y="7.8" width="7.4" height="7" rx="1" />
        <rect x="8.2" y="16.2" width="12.6" height="8.2" rx="1" />
      </g>
      <text x="9.8" y="22" fontFamily="Noto Sans" fontSize="5" fill="#555" textLength="8.6">Ctrl</text>
      <path d="M11 10H13.4M19 10.600H21.600" stroke="#7d8fa8" />
    </g>
  ),
  move: (
    <g>
      <Win x={0.4} y={2.2} w={31.6} h={27.6} bar={3} />
      <Arrow x={16.2} y={12.4} r={-90} s={0.95} />
      <Arrow x={16.2} y={23.8} r={90} s={0.95} />
      <Arrow x={9.8} y={18.1} r={180} s={0.95} />
      <Arrow x={22.6} y={18.1} s={0.95} />
    </g>
  ),
  resize: (
    <g>
      <Win x={5} y={7.6} w={26} h={23.6} bar={3} o={0.85} />
      <Win x={0.4} y={0.8} w={17.6} h={14.4} bar={2.4} />
      <Arrow x={20} y={18.6} r={225} s={0.8} />
      <Arrow x={25.6} y={26.2} r={45} s={0.8} />
    </g>
  ),
  shelf: (
    <g>
      <Win x={0.2} y={11} w={22.8} h={20.6} bar={3} />
      <Win x={21} y={0.8} w={11} h={10} bar={1.5} />
      <Arrow x={20.2} y={11.8} r={135} s={0.62} />
    </g>
  ),
  staticswitch: (
    <g>
      <rect x="1" y="2.4" width="30.6" height="28" rx="1.6" fill="url(#gPanel)" stroke="#a9a9a7" />
      <Win x={3} y={3.6} w={12.2} h={11} bar={1.2} />
      <Win x={16.6} y={3.6} w={12.4} h={11} bar={1.2} />
      <Win x={9.6} y={15.6} w={13} h={12} bar={1.4} stroke="#777" />
    </g>
  ),
  grid: (
    <g>
      <Win x={0.2} y={0.6} w={15.6} h={30.6} bar={4} />
      <Win x={16} y={0.6} w={15.6} h={30.6} bar={4} />
      <Arrow x={6.6} y={17} r={180} s={1.05} />
      <Arrow x={26.2} y={17} s={1.05} />
    </g>
  ),
  place: (
    <g>
      <ellipse cx="16" cy="30.6" rx="14" ry="1.4" fill="#000" opacity="0.2" />
      <Win x={0.3} y={2.4} w={31} h={27.8} bar={4} />
      <Arrow x={15.8} y={18.2} r={90} s={1.75} />
    </g>
  ),
  ring: (
    <g>
      <Win x={11.6} y={3.6} w={9} h={8} bar={1.2} />
      <Win x={0.3} y={9.4} w={11} h={9} bar={1.4} />
      <Win x={21.2} y={9.4} w={10.8} h={9} bar={1.4} />
      <Win x={8.2} y={16.2} w={14.8} h={12.8} bar={2} />
      <Arrow x={4.6} y={23.6} r={180} s={0.9} />
      <Arrow x={27} y={23.6} s={0.9} />
    </g>
  ),
  shift: (
    <g>
      <rect x="7" y="28" width="19" height="4" fill="url(#gReflect)" />
      <path d="M.6 7L6 8.5V25L.6 27.4ZM31.4 7L26 8.5V25L31.4 27.4Z" fill="#dededd" stroke="#b0b0ae" />
      <path d="M5 9.5L12.5 7V20L5 25ZM27 9.5L19.5 7V20L27 25Z" fill="#e9e9e8" stroke="#b5b5b3" />
      <path d="M1 8.5H7L11.500 10.400M31 8.5H25L20.500 10.400" fill="none" stroke="#7391bb" strokeWidth="1.6" />
      <Win x={6.6} y={11.6} w={20} h={17} bar={2.4} />
      <Arrow x={11.9} y={20.8} r={180} s={0.85} />
      <Arrow x={21} y={20.8} s={0.85} />
    </g>
  ),
  rules: (
    <g>
      <Win x={0.3} y={2.2} w={31} h={27.6} bar={3.6} />
      <path d="M8 14.5L11 12.8L28.5 14V22.5L30.5 26L28 28L26.5 25L24.5 29L22 25.5L20 29.5L17.5 25.5L15.5 29L13 25.5L11 28.5V19Z" fill="#f4f4f3" stroke="#a5a5a3" strokeWidth="0.8" />
      <path d="M13.5 17.5H26M14 20.5H27M13 24L26 23" stroke="#c5c5c3" strokeWidth="0.9" />
      <Arrow x={7.4} y={11.6} r={225} s={1.1} />
    </g>
  ),
};

/* ---------- content ---------- */

type Entry = { icon: string; label: string; on?: boolean; plain?: boolean };

const general: Entry[] = [
  { icon: 'commands', label: 'Commands' },
  { icon: 'composite', label: 'Composite', on: true },
  { icon: 'copy', label: 'Copy to texture' },
  { icon: 'tools', label: 'General Options', plain: true },
  { icon: 'gnome', label: 'Gnome Compatibility' },
  { icon: 'kde', label: 'KDE Compatibility' },
  { icon: 'mate', label: 'MATE Compatibility' },
  { icon: 'opengl', label: 'OpenGL', on: true },
];

const desktop: Entry[] = [
  { icon: 'clone', label: 'Clone Output' },
  { icon: 'cube', label: 'Desktop Cube', on: true },
  { icon: 'wall', label: 'Desktop Wall' },
  { icon: 'expo', label: 'Expo' },
  { icon: 'fade', label: 'Fade to Desktop' },
  { icon: 'rotate', label: 'Rotate Cube', on: true },
  { icon: 'show', label: 'Show Desktop' },
  { icon: 'viewport', label: 'Viewport Switcher' },
  { icon: 'widget', label: 'Widget Layer' },
];

const effects: Entry[] = [
  { icon: 'windows3d', label: '3D Windows' },
  { icon: 'lamp', label: 'Animations' },
  { icon: 'plane', label: 'Animations Add-On' },
  { icon: 'experimental', label: 'Animations\nExperimental' },
  { icon: 'plus', label: 'Animations Plus' },
  { icon: 'blur', label: 'Blur Windows' },
  { icon: 'gears', label: 'Cube Gears' },
  { icon: 'reflection', label: 'Cube Reflection and\nDeformation', on: true },
  { icon: 'fading', label: 'Fading Windows' },
  { icon: 'firepaint', label: 'Firepaint' },
  { icon: 'freely', label: 'Freely\nTransformable\nWindows' },
  { icon: 'motion', label: 'Motion blur' },
  { icon: 'simple', label: 'Simple Animations' },
  { icon: 'trail', label: 'Trailfocus' },
  { icon: 'water', label: 'Water Effect' },
  { icon: 'decoration', label: 'Window Decoration', on: true },
  { icon: 'wizard', label: 'Wizard' },
  { icon: 'wobbly', label: 'Wobbly Windows', on: true },
];

const windowManagement: Entry[] = [
  { icon: 'appswitch', label: 'Application Switcher', on: true },
  { icon: 'extra', label: 'Extra WM Actions' },
  { icon: 'grid', label: 'Grid' },
  { icon: 'maximumize', label: 'Maximumize' },
  { icon: 'move', label: 'Move Window', on: true },
  { icon: 'place', label: 'Place Windows' },
  { icon: 'put', label: 'Put' },
  { icon: 'resize', label: 'Resize Window', on: true },
  { icon: 'ring', label: 'Ring Switcher' },
  { icon: 'scale', label: 'Scale' },
  { icon: 'shelf', label: 'Shelf' },
  { icon: 'shift', label: 'Shift Switcher', on: true },
  { icon: 'snapping', label: 'Snapping Windows' },
  { icon: 'staticswitch', label: 'Static Application\nSwitcher' },
  { icon: 'rules', label: 'Window Rules' },
  { icon: 'naming', label: 'Workspace Naming' },
];

const Icon = ({ name }: { name: string }) => <IconBox viewBox="0 0 32 32">{icons[name]}</IconBox>;

const Items = ({ list, lift }: { list: Entry[]; lift?: boolean }) => (
  <>
    {list.map(e => (
      <Item key={e.label} $plain={e.plain}>
        {!e.plain && (
          <Check>
            {e.on && (
              <Tick width="16" height="16" viewBox="0 0 16 16">
                <path d="M3.8 8.2L6 6.8L8.2 9L13.6 4.6L15.6 5.2L8.600 12.6H7.2Z" fill="#2b3033" stroke="#2b3033" strokeWidth="0.5" strokeLinejoin="round" />
              </Tick>
            )}
          </Check>
        )}
        <Icon name={e.icon} />
        <Label $lift={lift && !e.label.includes('\n')}>{e.label}</Label>
      </Item>
    ))}
  </>
);

const Stops = ({ id, from, to, flat }: { id: string; from: string; to: string; flat?: boolean }) => (
  <linearGradient id={id} x1="0" y1="0" x2={flat ? '1' : '0'} y2={flat ? '0' : '1'}>
    <stop offset="0" stopColor={from} />
    <stop offset="1" stopColor={to} />
  </linearGradient>
);

export default function App() {
  return (
    <Page>
      <GlobalStyle />
      <Defs aria-hidden="true">
        <defs>
          <Stops id="gWin" from="#fbfbfb" to="#dcdcdb" />
          <Stops id="gPanel" from="#efefee" to="#cececd" />
          <Stops id="gFace" from="#fbfbfb" to="#e2e2e1" />
          <Stops id="gOlive" from="#a9aa97" to="#8f907c" />
          <Stops id="gDesk" from="#a5a692" to="#9c9d89" />
          <Stops id="gNavy" from="#2f5288" to="#4a74b4" />
          <Stops id="gNavyTop" from="#3f618f" to="#b3c6df" flat />
          <Stops id="gKde" from="#2453ad" to="#4f8ff0" />
          <Stops id="gGrey" from="#8e8e8c" to="#b5b5b3" />
          <Stops id="gReflect" from="#d5d9de" to="#fcfcfc" />
          <Stops id="gGold" from="#f6e04e" to="#d8b11c" />
          <Stops id="gCyl" from="#e2e2e1" to="#f6f6f5" />
          <Stops id="gTrail" from="#cfcad2" to="#eceaec" />
          <Stops id="gWater" from="#d6e4f2" to="#8db3dc" />
          <Stops id="gWob" from="#f1f1ef" to="#d5d8d2" />
          <Stops id="gScale" from="#61a9e6" to="#2a77cf" />
        </defs>
      </Defs>

      <Column $width={732} $top={81}>
        <Panel $width={681} $height={220} $pad={7}>
          <Heading $left={1}>
            <Icon name="general" />
            <Title $tracking={-0.5} $lift={2}>General</Title>
          </Heading>
          <Grid $left={13} $top={19} $rows="repeat(3, 46px)">
            <Items list={general} />
          </Grid>
          <Divider $y={212} />
          <Mark $x={228} $y={51} $w={146} $h={59} />
          <Mark $x={18} $y={148} $w={129} $h={6} />
          <Mark $x={228} $y={150} $w={146} $h={52} />
        </Panel>
        <Caption $left={270} $top={31} $height={154}>#1</Caption>
        <Panel $width={666} $height={259} $pad={39}>
          <Divider $y={7} />
          <Heading $left={5}>
            <Icon name="desktop" />
            <Title $tracking={-0.2}>Desktop</Title>
          </Heading>
          <Grid $left={17} $top={21} $rows="repeat(3, 46px)">
            <Items list={desktop} lift />
          </Grid>
          <Divider $y={245} />
          <Mark $x={233} $y={86} $w={171} $h={60} />
          <Mark $x={463} $y={136} $w={151} $h={51} />
          <Pointer width="16" height="22" viewBox="0 0 16 22">
            <path d="M1.5 1.2V17.6L5 14.4L7.6 19.8L10.2 18.6L7.8 13.4H12.6Z" fill="#fff" stroke="#000" strokeWidth="1.2" strokeLinejoin="round" />
          </Pointer>
        </Panel>
        <Caption $left={278} $top={42} $height={100}>#2</Caption>
      </Column>

      <Column $width={715} $top={0}>
        <Panel $width={688} $height={394} $pad={18} $bar="1px solid #e4e4e4" $indent={-1}>
          <Heading $left={7}>
            <Icon name="effects" />
            <Title>Effects</Title>
          </Heading>
          <Grid $left={19} $top={21} $rows="46px 48px 48px 65px 46px 46px">
            <Items list={effects} lift />
          </Grid>
          <Divider $y={385} $left={2} />
          <Mark $x={7} $y={325} $w={186} $h={48} />
          <Mark $x={237} $y={160} $w={198} $h={62} />
          <Mark $x={464} $y={314} $w={183} $h={61} />
          <FocusRing $x={244} $y={167} $w={22} $h={44} />
        </Panel>
        <Caption $left={330} $top={27} $height={82}>#3</Caption>
        <Panel $width={660} $height={347} $indent={54} $pad={14} $bar="8px solid #cdcdcd">
          <Heading $left={8}>
            <Icon name="wm" />
            <Title $tracking={-0.57}>Window Management</Title>
          </Heading>
          <Grid $left={19} $top={20} $rows="46px 46px 46px 46px 48px 46px">
            <Items list={windowManagement} />
          </Grid>
          <Mark $x={5} $y={63} $w={49} $h={53} />
          <Mark $x={232} $y={111} $w={42} $h={99} />
          <Mark $x={461} $y={202} $w={163} $h={54} />
        </Panel>
        <Caption $left={371} $top={22} $height={50}>#4</Caption>
      </Column>
    </Page>
  );
}
